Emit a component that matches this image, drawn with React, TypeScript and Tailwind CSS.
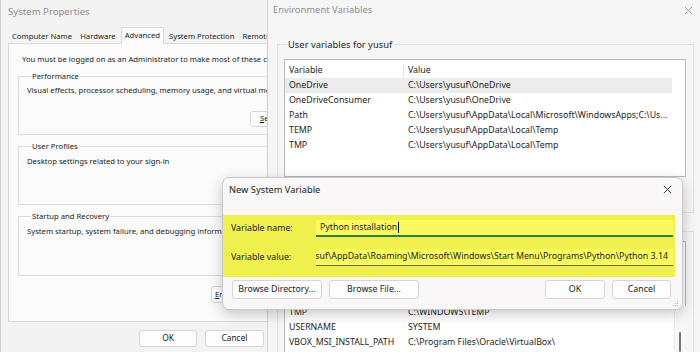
import React from "react";

const sans = "font-['Noto_Sans','Open_Sans',sans-serif]";

function Btn({ children, className = "" }: { children: React.ReactNode; className?: string }) {
  return (
    <div
      className={`flex items-center justify-center rounded-[3px] border border-[#d5d5d5] bg-[#fdfdfd] text-[#1b1b1b] ${className}`}
    >
      {children}
    </div>
  );
}

function Group({ label, className = "", children }: { label: string; className?: string; children?: React.ReactNode }) {
  return (
    <fieldset className={`border border-[#dcdcdc] ${className}`}>
      <legend className="ml-[4px] px-[1px] leading-[12px]">{label}</legend>
      {children}
    </fieldset>
  );
}

function SystemProperties() {
  const tabs = ["Computer Name", "Hardware", "Advanced", "System Protection", "Remote"];
  return (
    <div className="absolute left-0 top-0 h-[352px] w-[268px] overflow-hidden whitespace-nowrap border-l border-[#cfcfcf] bg-[#f3f3f3] text-[7.7px] text-[#1c1c1c]">
      <div className="h-[27px] pl-[7px] pt-[5px] text-[9.6px] text-[#8e8e8e]">System Properties</div>
      <div className="flex h-[16px] items-end gap-[2px] pl-[8px]">
        {tabs.map((t) =>
          t === "Advanced" ? (
            <div key={t} className="-mb-px h-[17px] border border-b-0 border-[#d9d9d9] bg-[#fbfbfb] px-[3px] pt-[1px] leading-[12px]">
              {t}
            </div>
          ) : (
            <div key={t} className="h-[15px] px-[3px] pt-[2px] leading-[12px]">
              {t}
            </div>
          )
        )}
      </div>
      <div className="ml-[7px] h-[279px] w-[300px] border border-[#dadada] bg-[#fbfbfb] pt-[9px]">
        <div className="pl-[13px] leading-[12px]">
          You must be logged on as an Administrator to make most of these changes.
        </div>
        <Group label="Performance" className="ml-[9px] mt-[5px] h-[65px] pl-[8px]">
          <div className="mt-[2px] leading-[12px]">
            Visual effects, processor scheduling, memory usage, and virtual memory
          </div>
          <Btn className="ml-[223px] mt-[15px] h-[16px] w-[70px] justify-start pl-[9px]">
            <span className="underline">S</span>ettings...
          </Btn>
        </Group>
        <Group label="User Profiles" className="ml-[9px] mt-[5px] h-[65px] pl-[8px]">
          <div className="mt-[3px] leading-[12px]">Desktop settings related to your sign-in</div>
        </Group>
        <Group label="Startup and Recovery" className="ml-[9px] mt-[5px] h-[66px] pl-[8px]">
          <div className="mt-[3px] leading-[12px]">
            System startup, system failure, and debugging information
          </div>
        </Group>
        <Btn className="ml-[202px] mt-[10px] h-[17px] w-[110px] justify-start pl-[3px]">
          <span className="underline">E</span>nvironment Variables...
        </Btn>
      </div>
      <div className="mt-[8px] flex gap-[8px] pl-[138px]">
        <Btn className="h-[17px] w-[58px] text-[8.4px]">OK</Btn>
        <Btn className="h-[17px] w-[59px] text-[8.4px]">Cancel</Btn>
      </div>
    </div>
  );
}

function VarList({
  rows,
  highlight,
  className = "",
}: {
  rows: [string, string][];
  highlight?: number;
  className?: string;
}) {
  return (
    <div className={`relative overflow-hidden border border-[#b9b9b9] bg-white ${className}`}>
      <div className="flex h-[18px] items-center pt-[3px]">
        <div className="w-[119px] border-r border-[#e3e3e3] pl-[4px]">Variable</div>
        <div className="pl-[4px]">Value</div>
      </div>
      {rows.map(([k, v], i) => (
        <div
          key={k}
          className={`mr-[13px] flex h-[15px] items-center ${i === highlight ? "bg-[#ececec]" : ""}`}
        >
          <div className="w-[119px] shrink-0 pl-[4px]">{k}</div>
          <div className="truncate pl-[4px]">{v}</div>
        </div>
      ))}
    </div>
  );
}

function EnvironmentVariables() {
  const user: [string, string][] = [
    ["OneDrive", "C:\\Users\\yusuf\\OneDrive"],
    ["OneDriveConsumer", "C:\\Users\\yusuf\\OneDrive"],
    ["Path", "C:\\Users\\yusuf\\AppData\\Local\\Microsoft\\WindowsApps;C:\\Us..."],
    ["TEMP", "C:\\Users\\yusuf\\AppData\\Local\\Temp"],
    ["TMP", "C:\\Users\\yusuf\\AppData\\Local\\Temp"],
  ];
  const system: [string, string][] = [
    ["PROCESSOR_REVISION", "a701"],
    ["PSModulePath", "%ProgramFiles%\\WindowsPowerShell\\Modules"],
    ["TEMP", "C:\\WINDOWS\\TEMP"],
    ["TMP", "C:\\WINDOWS\\TEMP"],
    ["USERNAME", "SYSTEM"],
    ["VBOX_MSI_INSTALL_PATH", "C:\\Program Files\\Oracle\\VirtualBox\\"],
    ["windir", "C:\\WINDOWS"],
  ];
  return (
    <div className="absolute left-[267px] top-0 h-[352px] w-[433px] overflow-hidden whitespace-nowrap border-l border-[#cfcfcf] bg-[#f6f6f6] text-[8.8px] text-[#1c1c1c]">
      <div className="flex h-[20px] items-center justify-between pl-[5px] pr-[7px] text-[9.4px] text-[#8e8e8e]">
        <span>Environment Variables</span>
        <svg width="9" height="9" viewBox="0 0 10 10" stroke="#9a9a9a" strokeWidth="1">
          <path d="M1 1 9 9M9 1 1 9" />
        </svg>
      </div>
      <fieldset className="ml-[9px] mt-[18px] h-[175px] w-[417px] border border-[#e0e0e0] px-[6px]">
        <legend className="ml-[3px] px-[1px] text-[9.4px] leading-[13px]">User variables for yusuf</legend>
        <VarList rows={user} highlight={0} className="mt-[8px] h-[118px] w-[402px]" />
      </fieldset>
      <fieldset className="ml-[9px] mt-[12px] h-[140px] w-[417px] border border-[#e0e0e0] px-[6px]">
        <legend className="ml-[3px] px-[1px] text-[9.4px] leading-[13px]">System variables</legend>
        <VarList rows={system} className="mt-[3px] h-[140px] w-[402px]" />
      </fieldset>
      <div className="absolute left-[406px] top-[306px] h-[46px] w-[12px] border-l border-[#ececec] bg-[#f7f7f7]">
        <div className="ml-[4px] mt-[26px] h-[20px] w-[2px] rounded-full bg-[#777]" />
      </div>
    </div>
  );
}

function NewSystemVariable() {
  return (
    <div className="absolute left-[222px] top-[177px] h-[133px] w-[461px] overflow-hidden whitespace-nowrap rounded-[7px] border border-[#c8c8c8] bg-[#f9f7f7] text-[8.8px] text-[#1c1c1c] shadow-[0_4px_14px_rgba(0,0,0,0.22)]">
      <div className="flex h-[37px] items-start justify-between pl-[6px] pr-[10px] pt-[5px]">
        <span className="text-[9.3px] leading-[13px]">New System Variable</span>
        <svg className="mt-[2px]" width="9" height="9" viewBox="0 0 10 10" stroke="#333" strokeWidth="1.1">
          <path d="M1 1 9 9M9 1 1 9" />
        </svg>
      </div>
      <div className="flex h-[62px] w-[452px] flex-col gap-[12px] bg-[#efef4d] pl-[8px] pr-[2px] pt-[5px]">
        <div className="flex items-center">
          <span className="w-[85px]">Variable name:</span>
          <div className="flex h-[17px] flex-1 items-center border-b-2 border-[#2e7d3c] bg-[#fafa5e] pl-[4px]">
            Python installation
            <span className="ml-px h-[11px] w-px bg-[#111]" />
          </div>
        </div>
        <div className="flex items-center">
          <span className="w-[85px]">Variable value:</span>
          <div className="flex h-[17px] flex-1 items-center justify-end overflow-hidden border-b border-[#6b6b30] bg-[#fafa5e] pr-[5px]">
            C:\Users\yusuf\AppData\Roaming\Microsoft\Windows\Start Menu\Programs\Python\Python 3.14
          </div>
        </div>
      </div>
      <div className="mt-[3px] flex h-[19px] pl-[9px] pr-[11px]">
        <Btn className="w-[90px]">Browse Directory...</Btn>
        <Btn className="ml-[7px] w-[90px]">Browse File...</Btn>
        <Btn className="ml-auto w-[60px] border-[#6f9bd6] shadow-[inset_0_0_0_1px_#ffffff]">OK</Btn>
        <Btn className="ml-[7px] w-[59px]">Cancel</Btn>
      </div>
      <svg className="absolute bottom-[2px] right-[3px]" width="7" height="7" viewBox="0 0 7 7" fill="#b5b5b5">
        <rect x="5" y="1" width="1" height="1" />
        <rect x="3" y="3" width="1" height="1" />
        <rect x="5" y="3" width="1" height="1" />
        <rect x="1" y="5" width="1" height="1" />
        <rect x="3" y="5" width="1" height="1" />
        <rect x="5" y="5" width="1" height="1" />
      </svg>
    </div>
  );
}

export default function App() {
  return (
    <div className={`relative h-[352px] w-[700px] overflow-hidden bg-[#e9e9e9] ${sans}`}>
      <SystemProperties />
      <EnvironmentVariables />
      <NewSystemVariable />
    </div>
  );
}
